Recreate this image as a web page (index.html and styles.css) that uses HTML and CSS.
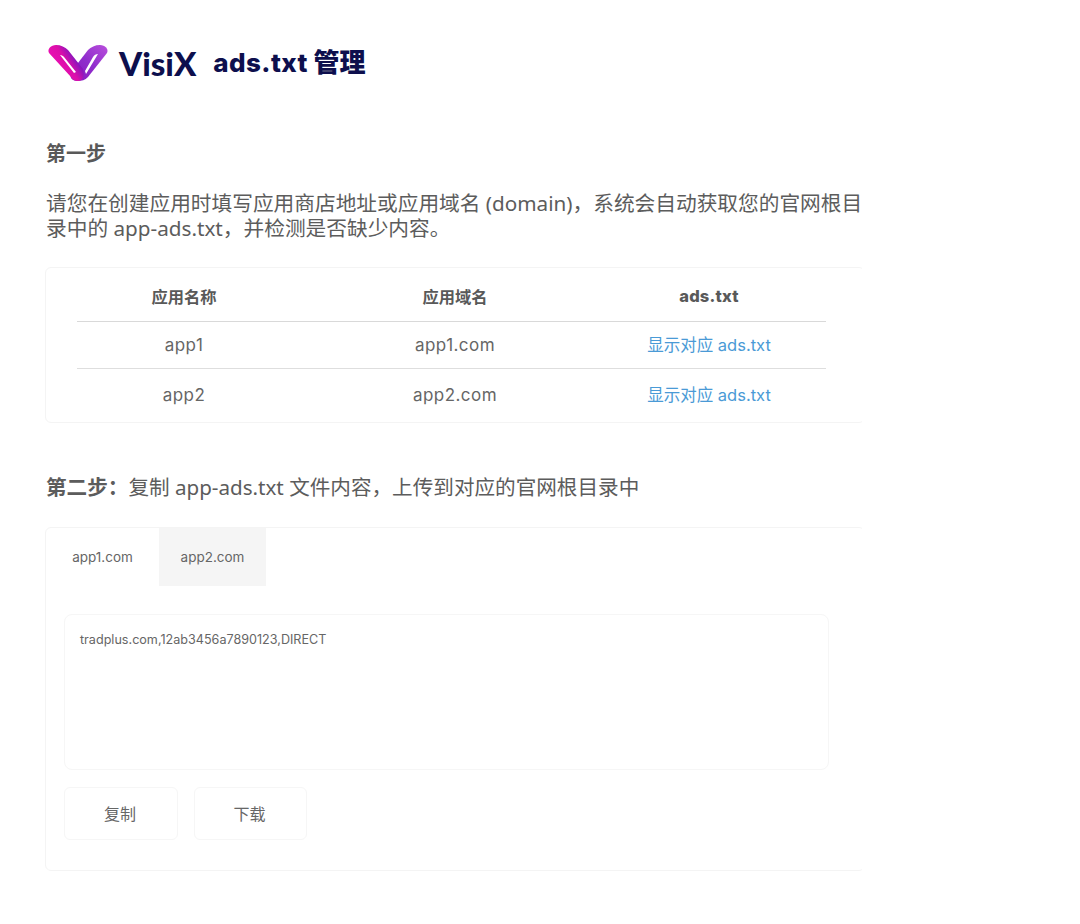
FILE: index.html
```html
<!DOCTYPE html>
<html lang="zh-CN">
<head>
<meta charset="utf-8">
<title>ads.txt 管理</title>
<link rel="stylesheet" href="styles.css">
</head>
<body>
<main class="page">
  <header class="brand">
    <svg class="logo" viewBox="0 0 62 38" width="62" height="38" aria-hidden="true">
      <defs>
        <linearGradient id="lg1" x1="0" y1="0.7" x2="0.85" y2="0.15">
          <stop offset="0" stop-color="#f40fb8"/>
          <stop offset="0.55" stop-color="#dc0eaa"/>
          <stop offset="0.9" stop-color="#6a18c4"/>
        </linearGradient>
        <linearGradient id="lg2" x1="0" y1="1" x2="1" y2="0">
          <stop offset="0" stop-color="#8a16bc"/>
          <stop offset="0.5" stop-color="#8f2dcc"/>
          <stop offset="1" stop-color="#b94fdc"/>
        </linearGradient>
      </defs>
      <path d="M60 9 C62 5 58 1 53 1 C48 1 44 3 41 6 L24 28 C22 33 25 37 30 37 C35 37 38 36 41 33 Z" fill="url(#lg2)"/>
      <path d="M2 9 C0 5 4 1 9 1 C14 1 18 3 21 6 L36 25 C38 31 36 37 31 37 C28 37 26 36 24 33 Z" fill="url(#lg1)"/>
      <path d="M13 11 C15 11 16 12 17 13 L29 28 L27 29 Z M51 10 C49 10 47 11 46 13 L38 27 L39 30 Z" fill="#fff"/>
    </svg>
    <span class="brand-name">VisiX</span>
    <h1 class="brand-title"><span class="brand-latin">ads.txt</span> 管理</h1>
  </header>

  <section class="step-one">
    <h2 class="step-label">第一步</h2>
    <p class="step-text">请您在创建应用时填写应用商店地址或应用域名 (domain)，系统会自动获取您的官网根目录中的 app-ads.txt，并检测是否缺少内容。</p>
    <div class="card table-card">
      <table class="apps">
        <colgroup>
          <col class="col-name">
          <col class="col-domain">
          <col class="col-ads">
        </colgroup>
        <thead>
          <tr><th>应用名称</th><th class="domain">应用域名</th><th class="ads-head">ads.txt</th></tr>
        </thead>
        <tbody>
          <tr class="row-one"><td>app1</td><td class="domain">app1.com</td><td><a class="link" href="#">显示对应 ads.txt</a></td></tr>
          <tr class="row-two"><td>app2</td><td class="domain">app2.com</td><td><a class="link" href="#">显示对应 ads.txt</a></td></tr>
        </tbody>
      </table>
    </div>
  </section>

  <section class="step-two">
    <h2 class="step-heading"><strong>第二步：</strong>复制 app-ads.txt 文件内容，上传到对应的官网根目录中</h2>
    <div class="card tab-card">
      <div class="tabs">
        <div class="tab tab-active">app1.com</div>
        <div class="tab tab-idle">app2.com</div>
      </div>
      <div class="tab-body">
        <div class="code-box">tradplus.com,12ab3456a7890123,DIRECT</div>
        <div class="actions">
          <button class="btn btn-copy" type="button">复制</button>
          <button class="btn btn-download" type="button">下载</button>
        </div>
      </div>
    </div>
  </section>
</main>
</body>
</html>
```

FILE: styles.css
```css
* { box-sizing: border-box; }
html, body { margin: 0; padding: 0; background: #fff; }
body {
  width: 1080px;
  height: 924px;
  overflow: hidden;
  color: #595959;
  font-family: "Noto Sans", "Noto Sans CJK SC", sans-serif;
}
.page {
  width: 862px;
  padding: 0 0 0 45px;
  overflow: hidden;
}
.brand {
  display: flex;
  align-items: center;
  height: 38px;
  margin-top: 44px;
  padding-left: 2px;
}
.logo { flex: none; }
.brand-name {
  margin-left: 10px;
  font-family: "Lato", "Noto Sans CJK SC", sans-serif;
  font-size: 33px;
  font-weight: 900;
  line-height: 38px;
  color: #0d0f4d;
}
.brand-title {
  margin: 0 0 0 17px;
  font-family: "Inter", "Noto Sans CJK SC", sans-serif;
  font-size: 26px;
  font-weight: 800;
  line-height: 38px;
  color: #0d0f4d;
}
.brand-latin { letter-spacing: 0.4px; }
.step-one { margin-top: 57px; }
.step-label {
  margin: 0;
  padding-left: 1px;
  font-family: "Noto Sans CJK SC", sans-serif;
  font-size: 20px;
  font-weight: 700;
  line-height: 28px;
  color: #595959;
}
.step-text {
  width: 825px;
  margin: 24px 0 0;
  padding-left: 1px;
  font-family: "Noto Sans", "Noto Sans CJK SC", sans-serif;
  font-size: 20.7px;
  line-height: 25px;
  color: #5c5c5c;
}
.card {
  width: 820px;
  border: 1px solid #f4f4f4;
  border-radius: 6px;
  background: #fff;
}
.table-card {
  height: 156px;
  margin-top: 26px;
  padding: 0 0 0 31px;
}
.apps {
  width: 749px;
  table-layout: fixed;
  border-collapse: collapse;
  font-family: "Inter", "Noto Sans CJK SC", sans-serif;
  font-size: 17px;
  letter-spacing: 0.45px;
  color: #666;
}
.col-name { width: 214px; }
.col-domain { width: 301px; }
.col-ads { width: 234px; }
.apps th {
  height: 53px;
  padding: 3px 0 0;
  font-size: 16.3px;
  font-weight: 700;
  letter-spacing: 0;
  text-align: center;
  color: #595959;
  border-bottom: 1px solid #d9d9d9;
}
.apps .ads-head { font-size: 16.5px; font-weight: 800; letter-spacing: 0.2px; }
.apps td { padding: 0; line-height: 20px; text-align: center; }
.row-one td { height: 47px; border-bottom: 1px solid #dedede; }
.row-two td { height: 53px; }
.apps .domain { padding-left: 27px; }
.link { display: block; line-height: 20px; color: #4a9ad6; font-size: 16.5px; letter-spacing: 0; text-decoration: none; }
.step-two { margin-top: 45px; }
.step-heading {
  margin: 0;
  padding-left: 1px;
  font-family: "Noto Sans", "Noto Sans CJK SC", sans-serif;
  font-size: 20.6px;
  font-weight: 400;
  line-height: 38px;
  color: #5c5c5c;
}
.step-heading strong { font-weight: 700; }
.tab-card {
  height: 344px;
  margin-top: 21px;
}
.tabs { display: flex; height: 58px; }
.tab {
  display: flex;
  align-items: center;
  justify-content: center;
  padding-bottom: 1px;
  font-family: "Inter", "Noto Sans CJK SC", sans-serif;
  font-size: 13.5px;
  color: #666;
}
.tab-active { width: 113px; }
.tab-idle { width: 107px; background: #f5f5f5; }
.tab-body { padding: 28px 0 0 18px; }
.code-box {
  width: 765px;
  height: 156px;
  padding: 16px 15px;
  border: 1px solid #f6f6f6;
  border-radius: 8px;
  font-family: "Inter", "Noto Sans CJK SC", sans-serif;
  font-size: 12.6px;
  line-height: 18px;
  color: #666;
}
.actions { display: flex; gap: 16px; margin-top: 17px; }
.btn {
  height: 53px;
  padding: 0 2px 2px 0;
  border: 1px solid #f6f6f6;
  border-radius: 6px;
  background: #fff;
  font-family: "Noto Sans CJK SC", sans-serif;
  font-size: 16px;
  color: #666;
}
.btn-copy { width: 114px; }
.btn-download { width: 113px; }
```
